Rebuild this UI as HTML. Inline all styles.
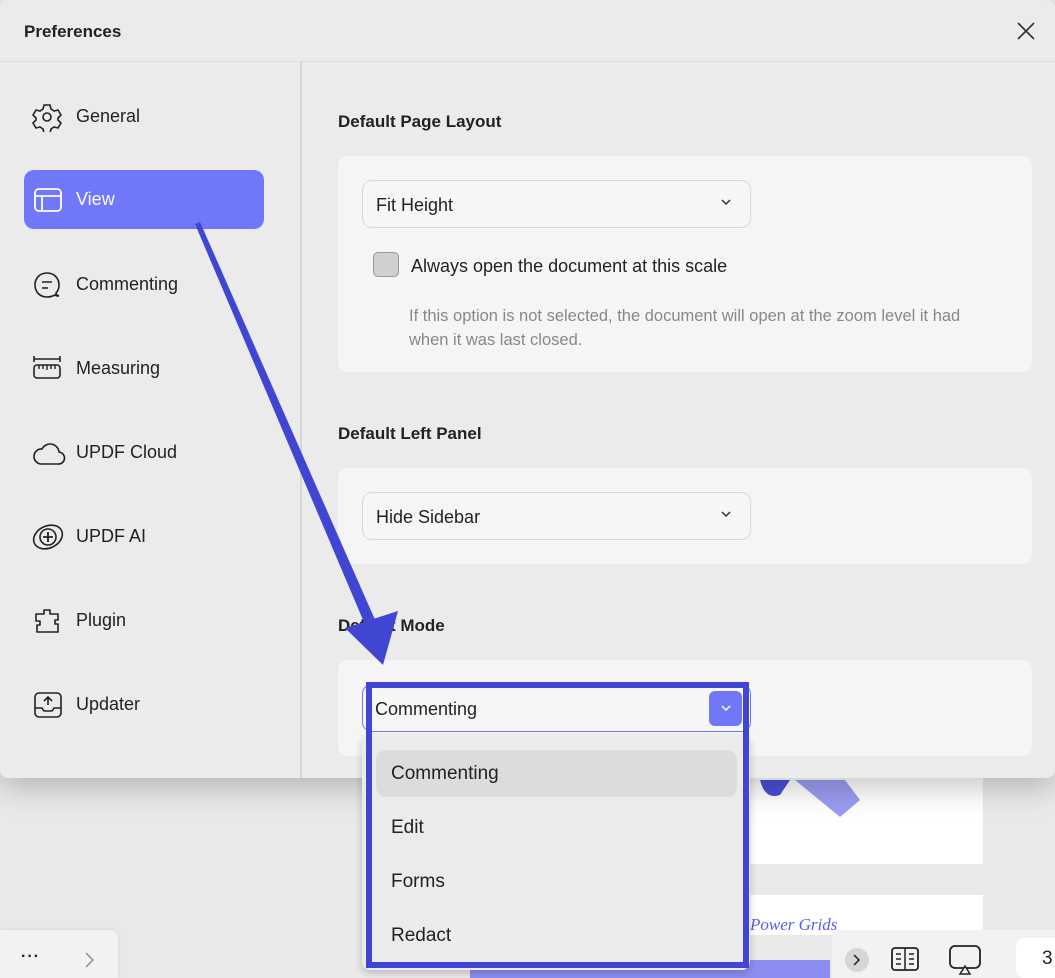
<!DOCTYPE html>
<html><head><meta charset="utf-8"><style>
*{margin:0;padding:0;box-sizing:border-box}
body{width:1055px;height:978px;overflow:hidden;background:#e9e9e9;font-family:"Liberation Sans",sans-serif;position:relative;color:#222}
.abs{position:absolute}
.dlg{left:0;top:0;width:1055px;height:778px;background:#ebebeb;border-radius:8px;box-shadow:0 10px 30px rgba(0,0,0,.22);overflow:hidden}
.title{left:24px;top:22px;font-weight:bold;font-size:17px}
.sep{left:0;top:61px;width:1055px;height:1px;background:#dcdcdc}
.vsep{left:300px;top:62px;width:2px;height:716px;background:#d6d6d6}
.nav{left:24px;width:240px;height:59px;border-radius:10px;display:flex;align-items:center;padding-left:52px;font-size:18px;color:#222}
.nav svg{position:absolute;left:8px;top:15px}
.act{background:#7177f9;color:#fff}
.h{left:338px;font-weight:bold;font-size:17px}
.card{left:338px;width:694px;background:#f5f5f5;border-radius:10px}
.sel{left:362px;width:389px;height:48px;border:1px solid #d8d8d8;border-radius:10px;background:#f6f6f6;font-size:18px;padding:14px 0 0 13px}
.chev{position:absolute;right:18px;top:16px}
.opt{left:391px;font-size:19px;color:#222}
</style></head><body>
<div class="abs" style="left:740px;top:778px;width:243px;height:86px;background:#fff"></div>
<div class="abs" style="left:740px;top:895px;width:243px;height:40px;background:#fff"></div>
<div class="abs" style="left:750px;top:915px;font-family:'Liberation Serif',serif;font-style:italic;color:#5a5ef0;font-size:17px">Power Grids</div>
<svg class="abs" style="left:750px;top:775px" width="115" height="45"><path d="M10 5 Q15 25 30 20 L40 5 Z" fill="#4a4fd6"/><path d="M45 5 L95 5 L110 25 L90 42 Z" fill="#9a9cf0"/></svg>
<div class="abs" style="left:470px;top:960px;width:360px;height:18px;background:#8b8ef0"></div>
<div class="abs" style="left:0;top:930px;width:118px;height:48px;background:#f2f2f2;border-radius:0 8px 0 0;box-shadow:0 0 4px rgba(0,0,0,.1)"></div>
<div class="abs" style="left:21px;top:948px;font-size:16px;font-weight:bold;letter-spacing:1px">···</div>
<svg class="abs" style="left:84px;top:951px" width="12" height="18"><path d="M2 2l7 7-7 7" stroke="#999" stroke-width="1.6" fill="none"/></svg>
<div class="abs" style="left:832px;top:930px;width:223px;height:48px;background:#f2f2f2;border-radius:8px 0 0 0"></div>
<div class="abs" style="left:845px;top:948px;width:24px;height:24px;border-radius:12px;background:#d6d6d6"></div>
<svg class="abs" style="left:852px;top:953px" width="10" height="14"><path d="M2 2l5 5-5 5" stroke="#222" stroke-width="1.5" fill="none"/></svg>
<svg class="abs" style="left:890px;top:946px" width="30" height="28"><rect x="2" y="2" width="26" height="22" rx="3" stroke="#222" stroke-width="1.8" fill="none"/><path d="M15 2v22M6 8h5M6 13h5M6 18h5M19 8h5M19 13h5M19 18h5" stroke="#222" stroke-width="1.5"/></svg>
<svg class="abs" style="left:948px;top:944px" width="34" height="32"><rect x="2" y="2" width="30" height="22" rx="5" stroke="#222" stroke-width="1.8" fill="none"/><path d="M17 22l-5 8h10z" stroke="#222" stroke-width="1.5" fill="#f2f2f2"/></svg>
<div class="abs" style="left:1016px;top:938px;width:50px;height:40px;background:#fff;border-radius:8px"></div>
<div class="abs" style="left:1042px;top:948px;font-size:19px">3</div>

<div class="abs dlg">
<div class="abs title">Preferences</div>
<svg class="abs" style="left:1016px;top:21px" width="20" height="20"><path d="M2 2l16 16M18 2L2 18" stroke="#333" stroke-width="1.6"/></svg>
<div class="abs sep"></div>
<div class="abs vsep"></div>

<div class="abs nav" style="top:87px"><svg width="30" height="30" viewBox="0 0 30 30"><path d="M12 3h6l1 4 3 2 4-1 3 5-3 3v2l3 3-3 5-4-1-3 2-1 4h-6l-1-4-3-2-4 1-3-5 3-3v-2l-3-3 3-5 4 1 3-2z" stroke="#222" stroke-width="1.6" fill="none"/><circle cx="15" cy="15" r="4" stroke="#222" stroke-width="1.6" fill="none"/></svg>General</div>
<div class="abs nav act" style="top:170px"><svg width="30" height="30"><rect x="3" y="4" width="26" height="22" rx="4" stroke="#fff" stroke-width="1.8" fill="none"/><path d="M3 11h26M10 11v15" stroke="#fff" stroke-width="1.8"/></svg>View</div>
<div class="abs nav" style="top:255px"><svg width="30" height="30"><path d="M27 26c-3 0-4-1-4-1-2 1-5 2-8 2C8 27 3 22 3 15S8 3 15 3s12 5 12 12c0 3-1 6-3 8 0 2 3 3 3 3z" stroke="#222" stroke-width="1.6" fill="none"/><path d="M10 12h10M10 18h6" stroke="#222" stroke-width="1.6"/></svg>Commenting</div>
<div class="abs nav" style="top:339px"><svg width="30" height="30"><path d="M2 2v6M28 2v6M2 5h26" stroke="#222" stroke-width="1.6"/><rect x="2" y="11" width="26" height="13" rx="3" stroke="#222" stroke-width="1.6" fill="none"/><path d="M7 11v4M11 11v4M15 11v5M19 11v4M23 11v4" stroke="#222" stroke-width="1.4"/></svg>Measuring</div>
<div class="abs nav" style="top:423px"><svg width="34" height="30"><path d="M9 26h17a6 6 0 0 0 1-12 9 9 0 0 0-17-3A7.5 7.5 0 0 0 9 26z" stroke="#222" stroke-width="1.6" fill="none"/></svg>UPDF Cloud</div>
<div class="abs nav" style="top:507px"><svg width="36" height="32" style="left:6px;top:14px"><ellipse cx="18" cy="16" rx="15" ry="11" stroke="#222" stroke-width="1.6" fill="none" transform="rotate(-25 18 16)"/><circle cx="18" cy="16" r="8" stroke="#222" stroke-width="1.6" fill="none"/><path d="M18 11v10M13 16h10" stroke="#222" stroke-width="1.8"/></svg>UPDF AI</div>
<div class="abs nav" style="top:591px"><svg width="30" height="30"><path d="M12 4h6v4h8v6h-3v4h3v8H5v-7h3v-4H4V8h8z" stroke="#222" stroke-width="1.6" fill="none" stroke-linejoin="round"/></svg>Plugin</div>
<div class="abs nav" style="top:675px"><svg width="30" height="30"><rect x="3" y="3" width="26" height="24" rx="4" stroke="#222" stroke-width="1.6" fill="none"/><path d="M3 18h7l2 3h8l2-3h7M16 15V8M12 11l4-4 4 4" stroke="#222" stroke-width="1.6" fill="none"/></svg>Updater</div>

<div class="abs h" style="top:112px">Default Page Layout</div>
<div class="abs card" style="top:156px;height:216px"></div>
<div class="abs sel" style="top:180px">Fit Height<svg class="chev" width="12" height="10"><path d="M2 3l4 4 4-4" stroke="#333" stroke-width="1.5" fill="none"/></svg></div>
<div class="abs" style="left:373px;top:252px;width:26px;height:25px;border:1px solid #999;border-radius:5px;background:#d0d0d0"></div>
<div class="abs" style="left:411px;top:256px;font-size:18px">Always open the document at this scale</div>
<div class="abs" style="left:409px;top:304px;font-size:16.5px;color:#888;line-height:24px;width:570px">If this option is not selected, the document will open at the zoom level it had when it was last closed.</div>

<div class="abs h" style="top:424px">Default Left Panel</div>
<div class="abs card" style="top:468px;height:96px"></div>
<div class="abs sel" style="top:492px">Hide Sidebar<svg class="chev" width="12" height="10"><path d="M2 3l4 4 4-4" stroke="#333" stroke-width="1.5" fill="none"/></svg></div>

<div class="abs h" style="top:616px">Default Mode</div>
<div class="abs card" style="top:660px;height:96px"></div>
<div class="abs sel" style="top:684px;border-color:#7177f9;padding-left:12px">Commenting<div class="abs" style="left:346px;top:6px;width:33px;height:35px;background:#7177f9;border-radius:6px"></div><svg class="abs" style="left:357px;top:18px" width="12" height="10"><path d="M2 3l4 4 4-4" stroke="#fff" stroke-width="1.5" fill="none"/></svg></div>
</div>

<div class="abs" style="left:362px;top:735px;width:388px;height:235px;background:#ebebeb;border-radius:8px;box-shadow:0 3px 8px rgba(0,0,0,.2)"></div>
<div class="abs" style="left:376px;top:750px;width:361px;height:47px;background:#dcdcdc;border-radius:10px"></div>
<div class="abs opt" style="top:763px">Commenting</div>
<div class="abs opt" style="top:817px">Edit</div>
<div class="abs opt" style="top:871px">Forms</div>
<div class="abs opt" style="top:925px">Redact</div>

<div class="abs" style="left:366px;top:682px;width:383px;height:286px;border:6px solid #4046d2"></div>
<svg class="abs" style="left:0;top:0" width="1055" height="978"><path d="M195 224L200 222L376 622L366 627Z" fill="#4046d2"/><path d="M345 628l53-17-15 54z" fill="#4046d2"/></svg>
</body></html>
